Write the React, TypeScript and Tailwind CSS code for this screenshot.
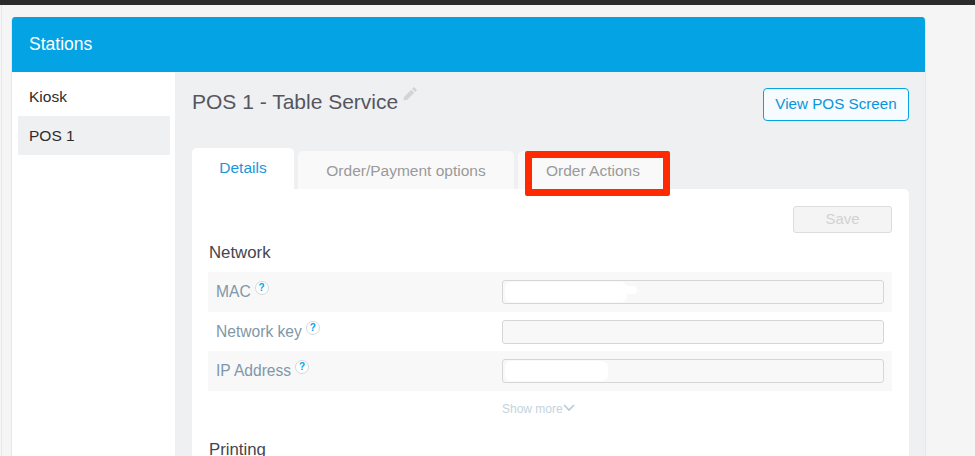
const rows = [
  { label: "MAC", rowClass: "h-[40px] bg-[#f8f8f8]", scribble: "w-[122px]", knob: true },
  { label: "Network key", rowClass: "h-[39px] bg-white", scribble: "", knob: false },
  { label: "IP Address", rowClass: "h-[40px] bg-[#f8f8f8]", scribble: "w-[103px]", knob: false },
];

function Help() {
  return (
    <span className="mb-[9px] ml-[4px] flex h-[14px] w-[14px] items-center justify-center rounded-full border border-[#d5d8dc] bg-white text-[10px] font-bold leading-none text-[#04a3e3]">
      ?
    </span>
  );
}

export default function App() {
  return (
    <div
      className="flex h-[456px] w-[975px] flex-col overflow-hidden bg-[#f5f5f5] antialiased"
      style={{ fontFamily: '"Liberation Sans", Arial, sans-serif' }}
    >
      <div className="h-[5px] bg-[#2b2b2b]" />

      <div className="flex flex-1">
        <div className="w-[2px] border-r border-[#e8e8e8]" />

        <div className="ml-[9px] mt-[12px] w-[915px] overflow-hidden rounded-t-[4px] border-x border-[#e6e7e9]">
          <header className="flex h-[55px] items-center bg-[#04a3e3] pl-[17px] text-[17.5px] text-white">
            Stations
          </header>

          <div className="flex h-[384px]">
            <aside className="w-[163px] bg-white pl-[6px] pr-[5px] pt-[5px] text-[15.5px] text-[#2c2c2c]">
              <div className="flex h-[39px] items-center pl-[11px]">Kiosk</div>
              <div className="flex h-[39px] items-center bg-[#eff0f2] pl-[11px]">POS 1</div>
            </aside>

            <main className="relative flex-1 bg-[#eff0f2] pl-[17px] pr-[16px]">
              <div className="flex h-[76px] items-start justify-between pt-[15px]">
                <div className="flex items-start">
                  <h1 className="text-[21px] leading-[29px] text-[#55565f]">POS 1 - Table Service</h1>
                  <svg viewBox="0 0 16 16" className="ml-[4px] mt-[-1px] h-[16px] w-[16px] fill-[#d3d4d6]">
                    <path d="M11.3 1.6a1 1 0 0 1 1.4 0l1.7 1.7a1 1 0 0 1 0 1.4l-1.2 1.2-3.1-3.1zM9.2 3.7l3.1 3.1-7 7-3.9.8.8-3.9z" />
                  </svg>
                </div>
                <button className="mt-[1px] h-[33px] w-[146px] rounded-[4px] border border-[#04a3e3] bg-[#f5fbff] text-[15.2px] text-[#0a95d8]">
                  View POS Screen
                </button>
              </div>

              <div className="flex h-[41px] items-end gap-[4px] text-[15.5px]">
                <div className="h-[41px] w-[102px] rounded-t-[5px] bg-white pt-[8px] text-center text-[#1a96db]">Details</div>
                <div className="h-[38px] w-[216px] rounded-t-[5px] bg-[#f9f9f9] pt-[8px] text-center text-[#9a9a9a]">
                  Order/Payment options
                </div>
                <div className="h-[38px] w-[146px] rounded-t-[5px] bg-[#f9f9f9] pl-[28px] pt-[8px] text-[#9a9a9a]">Order Actions</div>
              </div>

              <section className="h-[267px] rounded-tr-[5px] bg-white px-[17px] pt-[17px]">
                <div className="flex justify-end">
                  <button className="h-[27px] w-[99px] rounded-[3px] border border-[#dcdcdc] bg-[#f4f4f4] text-[15px] text-[#d2d2d2]">
                    Save
                  </button>
                </div>

                <h2 className="mt-[11px] h-[28px] text-[16.8px] leading-[18px] text-[#45464f]">Network</h2>

                <div className="ml-[-1px]">
                  {rows.map((row) => (
                    <div key={row.label} className={`flex items-start pl-[8px] pr-[8px] pt-[8px] ${row.rowClass}`}>
                      <div className="flex h-[24px] w-[286px] items-center text-[15.6px] text-[#7f97a8]">
                        {row.label}
                        <Help />
                      </div>
                      <div className="relative h-[24px] flex-1 rounded-[3px] border border-[#d6d6d6] bg-[#f8f8f8]">
                        {row.scribble && (
                          <div className={`absolute left-[2px] top-[1px] h-[20px] rounded-[6px] bg-white ${row.scribble}`} />
                        )}
                        {row.knob && (
                          <div className="absolute left-[120px] top-[5px] h-[8px] w-[14px] rounded-full bg-white" />
                        )}
                      </div>
                    </div>
                  ))}
                </div>

                <div className="ml-[293px] mt-[10px] flex items-center text-[12px] leading-[16px] text-[#c3d3e0]">
                  Show more
                  <svg viewBox="0 0 12 8" className="mb-[3px] h-[8px] w-[12px] fill-none stroke-[#b5cbdc] stroke-[1.6]">
                    <path d="M1 1l5 5 5-5" />
                  </svg>
                </div>

                <h2 className="mt-[24px] text-[16.8px] leading-[18px] text-[#45464f]">Printing</h2>
              </section>

              <div className="absolute left-[350px] top-[79px] h-[45px] w-[145px] rounded-[2px] border-[7px] border-[#ff2a00]" />
            </main>
          </div>
        </div>
      </div>
    </div>
  );
}
